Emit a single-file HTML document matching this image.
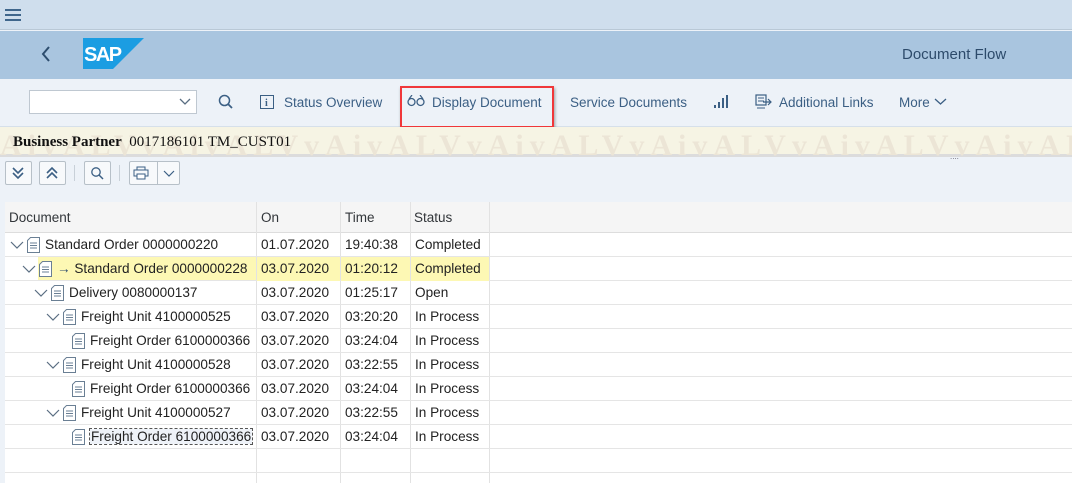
<!DOCTYPE html>
<html><head><meta charset="utf-8"><style>
*{margin:0;padding:0;box-sizing:border-box}
body{width:1072px;height:483px;overflow:hidden;background:#edf2f8;font-family:"Liberation Sans",sans-serif;position:relative;color:#32363a}
.abs{position:absolute}
.top{left:0;top:0;width:1072px;height:30px;background:#cfdeed;border-bottom:1px solid #b9c8d6}
.hdr{left:0;top:31px;width:1072px;height:48px;background:#a9c5df}
.tb{left:0;top:79px;width:1072px;height:48px;background:#edf2f8;border-bottom:1px solid #d6e0ea}
.tbt{font-size:13.5px;color:#3b5f84;top:95px}
.alv{left:0;top:127px;width:1072px;height:30px;background:#f6f4e4;border-bottom:3px solid #dcdcdc}
.wm{left:0;top:129px;font-family:"Liberation Serif",serif;font-size:30px;font-weight:bold;color:#ece5d6;letter-spacing:6px;white-space:nowrap;overflow:hidden;width:1072px;height:28px;line-height:34px}
.btn{top:161px;height:24px;border:1px solid #b7c0c8;background:#f7f9fb;border-radius:2px}
.grid{left:5px;top:202px;width:1067px;height:281px;background:#fff}
.row{position:absolute;left:0;width:1067px;height:24px;border-bottom:1px solid #e5e5e5;font-size:13.6px;line-height:23px;color:#222}
.c{position:absolute;top:0;height:24px;white-space:nowrap}
.vl{position:absolute;top:0;width:1px;height:281px;background:#e2e2e2}
.ic{display:inline-block;vertical-align:middle}
</style></head><body>
<div class="abs top"></div>
<svg class="abs" style="left:5px;top:8px" width="16" height="14"><g stroke="#3f668c" stroke-width="2"><line x1="0" y1="2" x2="16" y2="2"/><line x1="0" y1="7" x2="16" y2="7"/><line x1="0" y1="12" x2="16" y2="12"/></g></svg>
<div class="abs hdr"></div>
<svg class="abs" style="left:40px;top:45px" width="12" height="18"><polyline points="9,2 3,9 9,16" fill="none" stroke="#2d4d6e" stroke-width="2"/></svg>
<svg class="abs" style="left:83px;top:38px" width="61" height="31"><polygon points="0,0 61,0 30,31 0,31" fill="#1b9de2"/><text x="1" y="23" font-family="Liberation Sans" font-weight="bold" font-size="20" fill="#fff" letter-spacing="-1.5">SAP</text></svg>
<div class="abs" style="left:902px;top:46px;font-size:15px;color:#2d4b6b">Document Flow</div>
<div class="abs tb"></div>
<div class="abs" style="left:29px;top:90px;width:168px;height:24px;background:#fff;border:1px solid #bfc8d1"></div>
<svg class="abs" style="left:179px;top:98px" width="12" height="8"><polyline points="1,1 6,6 11,1" fill="none" stroke="#5a6e82" stroke-width="1.3"/></svg>
<svg class="abs" style="left:218px;top:94px" width="16" height="16"><circle cx="6.5" cy="6.5" r="5" fill="none" stroke="#3b5f84" stroke-width="1.5"/><line x1="10" y1="10" x2="14" y2="14" stroke="#3b5f84" stroke-width="1.8"/></svg>
<svg class="abs" style="left:260px;top:95px" width="14" height="14"><rect x="0.5" y="0.5" width="13" height="13" fill="none" stroke="#3b5f84"/><text x="5" y="11" font-size="10" font-weight="bold" fill="#3b5f84" font-family="Liberation Serif">i</text></svg>
<div class="abs tbt" style="left:284px">Status Overview</div>
<svg class="abs" style="left:407px;top:95px" width="18" height="12"><circle cx="4.5" cy="7" r="3.5" fill="none" stroke="#3b5f84" stroke-width="1.3"/><circle cx="13.5" cy="7" r="3.5" fill="none" stroke="#3b5f84" stroke-width="1.3"/><path d="M2 4 L5 0 M16 4 L13 0" stroke="#3b5f84" stroke-width="1.2"/></svg>
<div class="abs tbt" style="left:432px">Display Document</div>
<div class="abs tbt" style="left:570px">Service Documents</div>
<svg class="abs" style="left:713px;top:94px" width="16" height="15"><g fill="#3b5f84"><rect x="1" y="11" width="2" height="3"/><rect x="5" y="8" width="2" height="6"/><rect x="9" y="4" width="2" height="10"/><rect x="13" y="1" width="2" height="13"/></g></svg>
<svg class="abs" style="left:755px;top:94px" width="18" height="16"><rect x="1" y="1" width="10" height="10" fill="none" stroke="#3b5f84" stroke-width="1.2"/><line x1="3" y1="4" x2="9" y2="4" stroke="#3b5f84"/><line x1="3" y1="7" x2="9" y2="7" stroke="#3b5f84"/><path d="M8 8 H16 M13 5 L16 8 L13 11" fill="none" stroke="#3b5f84" stroke-width="1.2"/><line x1="2" y1="14" x2="10" y2="14" stroke="#3b5f84"/></svg>
<div class="abs tbt" style="left:779px">Additional Links</div>
<div class="abs tbt" style="left:899px">More</div>
<svg class="abs" style="left:934px;top:98px" width="13" height="8"><polyline points="1,1 6.5,6 12,1" fill="none" stroke="#3b5f84" stroke-width="1.3"/></svg>
<div class="abs" style="left:400px;top:86px;width:154px;height:42px;border:2px solid #f0373a;box-shadow:1px 2px 3px rgba(0,0,0,.35)"></div>
<div class="abs alv"></div>
<div class="abs wm">AivALVvAivALVvAivALVvAivALVvAivALVvAivALVvAivALV</div>
<div class="abs" style="left:13px;top:134px;font-family:'Liberation Serif',serif;font-size:15px;color:#111"><b>Business Partner</b>&nbsp; 0017186101 TM_CUST01</div>
<div class="abs" style="left:950px;top:155px;font-size:8px;color:#667;line-height:4px">....</div>
<div class="abs" style="left:0;top:160px;width:1072px;height:42px;background:#edf2f8"></div>
<div class="abs btn" style="left:5px;width:27px"></div>
<svg class="abs" style="left:11px;top:166px" width="14" height="14"><path d="M2 2 L7 7 L12 2 M2 7 L7 12 L12 7" fill="none" stroke="#3b5f84" stroke-width="1.6"/></svg>
<div class="abs btn" style="left:39px;width:27px"></div>
<svg class="abs" style="left:45px;top:166px" width="14" height="14"><path d="M2 7 L7 2 L12 7 M2 12 L7 7 L12 12" fill="none" stroke="#3b5f84" stroke-width="1.6"/></svg>
<div class="abs" style="left:74px;top:165px;width:1px;height:16px;background:#c8d0d8"></div>
<div class="abs btn" style="left:84px;width:27px"></div>
<svg class="abs" style="left:90px;top:166px" width="14" height="14"><circle cx="6" cy="6" r="4.2" fill="none" stroke="#3b5f84" stroke-width="1.3"/><line x1="9" y1="9" x2="13" y2="13" stroke="#3b5f84" stroke-width="1.5"/></svg>
<div class="abs" style="left:119px;top:165px;width:1px;height:16px;background:#c8d0d8"></div>
<div class="abs btn" style="left:129px;width:51px"></div>
<div class="abs" style="left:157px;top:162px;width:1px;height:22px;background:#b7c0c8"></div>
<svg class="abs" style="left:133px;top:166px" width="16" height="14"><rect x="4" y="1" width="8" height="3" fill="none" stroke="#3b5f84"/><rect x="1" y="4" width="14" height="6" fill="none" stroke="#3b5f84"/><rect x="4" y="8" width="8" height="5" fill="#fff" stroke="#3b5f84"/></svg>
<svg class="abs" style="left:163px;top:170px" width="12" height="7"><polyline points="1,1 6,6 11,1" fill="none" stroke="#3b5f84" stroke-width="1.2"/></svg>
<div class="abs grid">
<div class="row" style="top:0;height:31px;background:#f5f5f5;border-bottom:1px solid #ddd;line-height:31px;color:#32363a;font-size:13.5px"><div class="c" style="left:4px">Document</div><div class="c" style="left:256px">On</div><div class="c" style="left:340px">Time</div><div class="c" style="left:409px">Status</div></div>
<div class="vl" style="left:251px"></div><div class="vl" style="left:335px"></div><div class="vl" style="left:405px"></div><div class="vl" style="left:484px"></div>
</div>
<div id="rows"></div>
<script>
var R=[[0,1,"Standard Order 0000000220","01.07.2020","19:40:38","Completed"],
[1,1,"Standard Order 0000000228","03.07.2020","01:20:12","Completed",1],
[2,1,"Delivery 0080000137","03.07.2020","01:25:17","Open"],
[3,1,"Freight Unit 4100000525","03.07.2020","03:20:20","In Process"],
[4,0,"Freight Order 6100000366","03.07.2020","03:24:04","In Process"],
[3,1,"Freight Unit 4100000528","03.07.2020","03:22:55","In Process"],
[4,0,"Freight Order 6100000366","03.07.2020","03:24:04","In Process"],
[3,1,"Freight Unit 4100000527","03.07.2020","03:22:55","In Process"],
[4,0,"Freight Order 6100000366","03.07.2020","03:24:04","In Process",0,1],
["","","","","",""]];
var h="",doc='<svg class="ic" width="13" height="16" style="margin-right:5px"><path d="M3.5 .5 H12.5 V15.5 H.5 V3.5 Z" fill="#fff" stroke="#6a7f94"/><path d="M3 6h7M3 8.5h7M3 11h7" stroke="#6a7f94"/></svg>';
var chev='<svg class="ic" width="14" height="10" style="margin-right:2px"><polyline points="1,2 7,8 13,2" fill="none" stroke="#5a6e82" stroke-width="1.2"/></svg>';
R.forEach(function(r,i){var y=233+i*24;
 var ind=[5,17,29,41,41][r[0]]||0;
 var yl=r[6]?'background:#fdf8b4;':'';
 h+='<div class="row" style="left:5px;top:'+y+'px;">';
 if(r[2]){
 var x0=ind+(r[1]?0:25);
 h+='<div class="c" style="left:0;width:251px;overflow:hidden"><div style="position:absolute;top:0;left:'+x0+'px;'+(r[6]?'right:0;':'')+'">'+(r[1]?chev:'')+'<span style="'+yl+'padding:2px 2px 2px 1px;display:inline-block;line-height:19px;width:'+(r[6]?'230px':'auto')+'">'+doc+(r[6]?'<span style="color:#2d4d6e;font-weight:bold">&#8594;</span> ':'')+(r[7]?'<span style="outline:1px dashed #555;background:#eef2f8;padding:0 1px">'+r[2]+'</span>':r[2])+'</span></div></div>';
 var bg=r[6]?'background:#fdf8b4;':'';
 h+='<div class="c" style="left:252px;width:83px;padding-left:4px;'+bg+'">'+r[3]+'</div><div class="c" style="left:336px;width:69px;padding-left:4px;'+bg+'">'+r[4]+'</div><div class="c" style="left:406px;width:78px;padding-left:4px;'+bg+'">'+r[5]+'</div>';}
 h+='</div>';});
document.getElementById('rows').innerHTML=h;
</script>
</body></html>
